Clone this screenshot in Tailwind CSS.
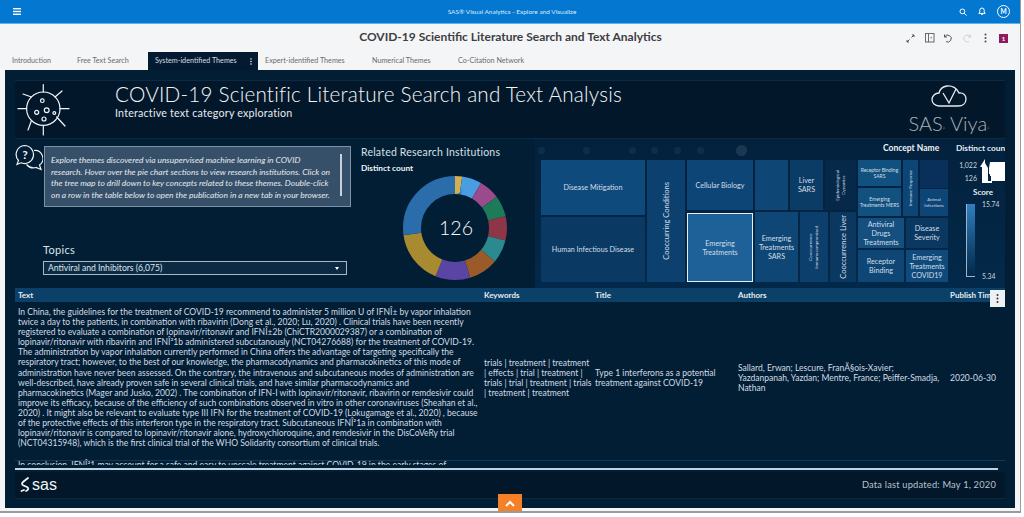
<!DOCTYPE html>
<html lang="en">
<head>
  <meta charset="UTF-8" />
  <title>COVID-19 Scientific Literature Search and Text Analytics</title>
  <script src="https://cdn.jsdelivr.net/npm/@tailwindcss/browser@4"></script>
</head>
<body class="bg-white h-[517px] w-[1024px] overflow-hidden font-['Lato',sans-serif]">
  <div class="relative h-[513px] w-[1021px] bg-[#f4f5f7] border-r border-b-2 border-[#9a9a9a] flex flex-col overflow-hidden">

    <!-- App bar -->
    <header class="h-[24px] shrink-0 bg-[#0478d0] border-b border-[#5fb0ea] flex items-center justify-between pl-[13px] pr-[10px] text-white">
      <svg width="8" height="7" viewBox="0 0 8 7" fill="white"><rect width="8" height="1.4"/><rect y="2.8" width="8" height="1.4"/><rect y="5.6" width="8" height="1.4"/></svg>
      <div class="absolute left-0 w-[1024px] text-center text-[6.500px] text-[#dcecf9]">SAS® Visual Analytics - Explore and Visualize</div>
      <div class="flex items-center gap-[11px]">
        <svg width="8" height="8" viewBox="0 0 8 8" fill="none" stroke="white" stroke-width="1"><circle cx="3.4" cy="3.4" r="2.4"/><path d="M5.2 5.2 7.6 7.6"/></svg>
        <svg width="8" height="9" viewBox="0 0 8 9" fill="none" stroke="white" stroke-width="1"><path d="M4 1a2.200 2.200 0 0 1 2.200 2.200V5L7.200 6.400H.8L1.800 5V3.200A2.200 2.200 0 0 1 4 1Z"/><path d="M3.200 7.500h1.600"/></svg>
        <div class="w-[13px] h-[13px] rounded-full border border-white flex items-center justify-center text-[6.500px] font-bold">M</div>
      </div>
    </header>

    <!-- Report title -->
    <div class="h-[28px] shrink-0 relative flex items-center justify-end pr-[12px]">
      <div class="absolute left-0 top-[4px] w-[1021px] text-center text-[12px] font-bold text-[#3d3d42]">COVID-19 Scientific Literature Search and Text Analytics</div>
      <div class="flex items-center text-[#5c5c60]">
        <svg class="mr-[10px]" width="9" height="9" viewBox="0 0 9 9" fill="none" stroke="#55555a" stroke-width="1"><path d="M5.500 3.500 8 1M8 1H6M8 1v2M3.500 5.500 1 8M1 8h2M1 8V6"/></svg>
        <svg class="mr-[8px]" width="10" height="10" viewBox="0 0 10 10" fill="none" stroke="#6a6a70" stroke-width="1"><rect x=".5" y=".5" width="8.500" height="8.500"/><path d="M3.500 .5v8.500M5.500 4.800h1.500"/></svg>
        <svg class="mr-[9px]" width="10" height="10" viewBox="0 0 10 10" fill="none" stroke="#55555a" stroke-width="1"><path d="M1.500 1.500v2.500H4M1.700 3.800A3.500 3.500 0 1 1 3 8.600"/></svg>
        <svg class="mr-[12px]" width="10" height="10" viewBox="0 0 10 10" fill="none" stroke="#d0d0d4" stroke-width="1"><path d="M8.500 1.500v2.500H6M8.300 3.800A3.500 3.500 0 1 0 7 8.600"/></svg>
        <svg class="mr-[12px]" width="3" height="10" viewBox="0 0 3 10" fill="#4a4a50"><circle cx="1.500" cy="1.500" r="1"/><circle cx="1.500" cy="5" r="1"/><circle cx="1.500" cy="8.500" r="1"/></svg>
        <div class="w-[9px] h-[9px] bg-[#8f1a5d] text-white text-[6px] font-bold flex items-center justify-center">1</div>
      </div>
    </div>

    <!-- Tabs -->
    <nav class="h-[18px] shrink-0 flex items-stretch text-[7.200px] text-[#6b6b70]">
      <div class="w-[148px] flex items-center pl-[12px] pt-[1px]"><span class="w-[65px]">Introduction</span><span>Free Text Search</span></div>
      <div class="w-[110px] bg-[#031a30] text-[#d5dee6] flex items-center justify-between pl-[7px] pr-[6px] pt-[1px]">
        <span>System-identified Themes</span>
        <svg width="2" height="7" viewBox="0 0 2 7" fill="#e6edf3"><circle cx="1" cy="1" r=".8"/><circle cx="1" cy="3.500" r=".8"/><circle cx="1" cy="6" r=".8"/></svg>
      </div>
      <div class="flex items-center pl-[7px] pt-[1px]"><span class="w-[107px]">Expert-identified Themes</span><span class="w-[86px]">Numerical Themes</span><span>Co-Citation Network</span></div>
    </nav>

    <!-- Dashboard -->
    <main class="h-[438px] w-[1010px] ml-[5px] shrink-0 bg-[#011e35] px-[10px] pt-[10px] flex flex-col text-white">

      <!-- Banner -->
      <section class="h-[59px] shrink-0 bg-[#03172a] border-y border-[#0a2a45] relative">
        <svg class="absolute left-[-5px] top-[-3px]" width="70" height="60" viewBox="0 0 70 60" fill="none" stroke="#f2f5f8" stroke-width="1.200" stroke-linecap="round">
          <circle cx="33.300" cy="30.700" r="16.700"/>
          <path d="M33.300 14V6.500M33.300 47.500V57M16.600 30.700H8M50 30.700H59M21.500 19 13 16M45 19 52 13M21.500 42.500 18 52M46.700 39 55 48"/>
          <circle cx="32.300" cy="22.700" r="1.800"/><circle cx="26.700" cy="34.300" r="2"/><circle cx="36.700" cy="32.300" r="2.400"/><circle cx="44.300" cy="35" r="1.400"/><circle cx="34" cy="41" r="2"/>
        </svg>
        <div class="pl-[100px]">
          <h1 class="text-[20.700px] font-light leading-[27px] text-[#f4f7fa] tracking-[0.2px]">COVID-19 Scientific Literature Search and Text Analysis</h1>
          <p class="-mt-[2px] text-[10.700px] leading-[14px] text-[#e6ebf0] tracking-[0.2px]">Interactive text category exploration</p>
        </div>
        <div class="absolute left-[896px] top-[4px] w-[76px] flex flex-col items-center">
          <svg width="36" height="22" viewBox="0 0 36 22" fill="none" stroke="#e6ebf0" stroke-width="1.300"><path d="M8 21H27C32 21 35 18 35 14C35 10 32 7.500 28 8C26 3 21 .5 16 1C12 1.500 9 4 8 8C4 8 1 11 1 14.500C1 18 4 21 8 21Z"/><path d="M12 8 18 18 25 4"/></svg>
          <div class="mt-[4px] text-[20px] font-light leading-[24px] text-[#a9b3bd] whitespace-nowrap">SAS<sup class="text-[3px]">®</sup> Viya<sup class="text-[3px]">®</sup></div>
        </div>
      </section>

      <!-- Intro, donut, treemap -->
      <section class="h-[149px] shrink-0 flex">
        <div class="w-[346px] shrink-0 relative">
          <svg class="absolute left-0 top-[5px]" width="28" height="28" viewBox="0 0 28 28" fill="none" stroke="#f2f5f8" stroke-width="1.200"><path d="M9.500 1.500A9 9 0 1 1 6 18.800L2 20.500 3.500 16.500A9 9 0 0 1 9.500 1.500Z"/><path d="M19 6.500A8 8 0 0 1 24.500 21L26 25.500 21 23.500A9 9 0 0 1 11.500 20.500"/><text x="10" y="14.500" text-anchor="middle" font-size="12" font-weight="700" font-family="Lato" fill="#f2f5f8" stroke="none">?</text></svg>
          <div class="absolute left-[29px] top-[7px] w-[307px] h-[61px] bg-[#37506a] border border-[#7d92a5] pl-[6px] pt-[8px] text-[8.450px] leading-[11.700px] italic text-[#e3e9ee] whitespace-nowrap">
            <p>Explore themes discovered via unsupervised machine learning in COVID</p>
            <p>research. Hover over the pie chart sections to view research institutions. Click on</p>
            <p>the tree map to drill down to key concepts related to these themes. Double-click</p>
            <p>on a row in the table below to open the publication in a new tab in your browser.</p>
            <div class="absolute left-[295px] top-[7px] w-[2px] h-[42px] bg-[#c7d2dc]"></div>
          </div>
          <div class="absolute left-[28px] top-[103px] text-[11px] text-[#dce3e9] tracking-[0.3px]">Topics</div>
          <div class="absolute left-[28px] top-[122px] w-[304px] h-[14px] bg-[#0d2a44] border border-[#a9b8c5] flex items-center justify-between pl-[4px] pr-[7px] text-[8.600px] text-[#dfe6ec]">
            <span>Antiviral and Inhibitors (6,075)</span>
            <span class="w-0 h-0 border-x-[2px] border-x-transparent border-t-[3px] border-t-white"></span>
          </div>
        </div>

        <div class="w-[174px] shrink-0 relative">
          <div class="pt-[6px] text-[10.500px] leading-[15px] text-[#d9e0e6] tracking-[0.2px] whitespace-nowrap">Related Research Institutions</div>
          <div class="pt-[2px] text-[8.300px] leading-[12px] font-bold text-[#f0f3f6]">Distinct count</div>
          <svg class="absolute left-[42px] top-[37px]" width="104" height="104" viewBox="0 0 104 104" fill="none" stroke-width="18">
            <g transform="rotate(-90 52 52)">
              <circle cx="52" cy="52" r="43" pathLength="360" stroke="#d3b04f" stroke-dasharray="8 352" stroke-dashoffset="0"/>
              <circle cx="52" cy="52" r="43" pathLength="360" stroke="#4a9de0" stroke-dasharray="22 338" stroke-dashoffset="-8"/>
              <circle cx="52" cy="52" r="43" pathLength="360" stroke="#9b4a8c" stroke-dasharray="23 337" stroke-dashoffset="-30"/>
              <circle cx="52" cy="52" r="43" pathLength="360" stroke="#1f7a5a" stroke-dasharray="24 336" stroke-dashoffset="-53"/>
              <circle cx="52" cy="52" r="43" pathLength="360" stroke="#8d3645" stroke-dasharray="27 333" stroke-dashoffset="-77"/>
              <circle cx="52" cy="52" r="43" pathLength="360" stroke="#2a8a90" stroke-dasharray="26 334" stroke-dashoffset="-104"/>
              <circle cx="52" cy="52" r="43" pathLength="360" stroke="#9a5a2a" stroke-dasharray="33 327" stroke-dashoffset="-130"/>
              <circle cx="52" cy="52" r="43" pathLength="360" stroke="#5a45a5" stroke-dasharray="39 321" stroke-dashoffset="-163"/>
              <circle cx="52" cy="52" r="43" pathLength="360" stroke="#a88a30" stroke-dasharray="60 300" stroke-dashoffset="-202"/>
              <circle cx="52" cy="52" r="43" pathLength="360" stroke="#2b6cab" stroke-dasharray="98 262" stroke-dashoffset="-262"/>
            </g>
          </svg>
          <div class="absolute left-[43px] top-[37px] w-[104px] h-[104px] flex items-center justify-center text-[19.500px] font-light text-white">126</div>
        </div>

        <div class="flex-1 bg-gradient-to-b from-[#03213d] to-[#03294a] relative flex overflow-hidden pl-[6px]">
          <!-- faint bubbles behind the concept name strip -->
          <div class="absolute left-[3px] top-[8px] w-[7px] h-[7px] rounded-full bg-white/5"></div>
          <div class="absolute left-[48px] top-[8px] w-[7px] h-[7px] rounded-full bg-white/5"></div>
          <div class="absolute left-[94px] top-[8px] w-[7px] h-[7px] rounded-full bg-white/5"></div>
          <div class="absolute left-[116px] top-[8px] w-[7px] h-[7px] rounded-full bg-white/5"></div>
          <div class="absolute left-[139px] top-[8px] w-[7px] h-[7px] rounded-full bg-white/5"></div>
          <div class="absolute left-[162px] top-[8px] w-[7px] h-[7px] rounded-full bg-white/5"></div>
          <div class="absolute left-[201px] top-[6px] w-[11px] h-[11px] rounded-full bg-white/10"></div>

          <div class="w-[416px] shrink-0 pt-[21px] pr-[3px]">
            <div class="h-[122px] flex gap-[2px] text-[7.200px] leading-[9px] text-[#d3dee7] text-center">
              <div class="w-[104px] flex flex-col gap-[2px]">
                <div class="h-[55px] bg-[#0f4a7c] flex items-center justify-center">Disease Mitigation</div>
                <div class="flex-1 bg-[#0a3a64] flex items-center justify-center">Human Infectious Disease</div>
              </div>
              <div class="w-[38px] bg-[#0c416f] flex items-center justify-center"><span class="[writing-mode:vertical-rl] rotate-180 text-[7.500px]">Cooccurring Conditions</span></div>
              <div class="w-[66px] flex flex-col gap-[3px]">
                <div class="h-[50px] bg-[#0d4676] flex items-center justify-center">Cellular Biology</div>
                <div class="flex-1 bg-[#1e6198] border-[1.500px] border-[#e8eef3] flex items-center justify-center">Emerging<br />Treatments</div>
              </div>
              <div class="w-[101px] flex flex-col gap-[2px]">
                <div class="h-[50px] flex gap-[2px]">
                  <div class="w-[33px] bg-[#0e4775]"></div>
                  <div class="w-[33px] bg-[#0b3c66] flex items-center justify-center">Liver<br />SARS</div>
                  <div class="flex-1 bg-[#06294a] flex items-center justify-center"><span class="[writing-mode:vertical-rl] rotate-180 text-[4.500px] leading-[6px]">Epidemiological<br />Dynamics</span></div>
                </div>
                <div class="flex-1 flex gap-[2px]">
                  <div class="w-[43px] bg-[#0e4775] flex items-center justify-center">Emerging<br />Treatments<br />SARS</div>
                  <div class="w-[28px] bg-[#0c3f6b] flex items-center justify-center"><span class="[writing-mode:vertical-rl] rotate-180 text-[4.500px] leading-[6px]">Cooccurrence<br />Immunocompromised</span></div>
                  <div class="flex-1 bg-[#0a3860] flex items-center justify-center"><span class="[writing-mode:vertical-rl] rotate-180 text-[7.500px]">Cooccurrence Liver</span></div>
                </div>
              </div>
              <div class="w-[90px] flex flex-col gap-[2px]">
                <div class="h-[56px] flex gap-[2px]">
                  <div class="w-[43px] flex flex-col gap-[2px] text-[5px] leading-[6px]">
                    <div class="h-[26px] bg-[#11517f] flex items-center justify-center">Receptor Binding<br />SARS</div>
                    <div class="flex-1 bg-[#11517f] flex items-center justify-center">Emerging<br />Treatments MERS</div>
                  </div>
                  <div class="w-[15px] bg-[#0d4676] flex items-center justify-center"><span class="[writing-mode:vertical-rl] rotate-180 text-[4.500px]">Immune Response</span></div>
                  <div class="flex-1 flex flex-col gap-[1px] text-[4.500px] leading-[6px]">
                    <div class="h-[28px] bg-[#08305a]"></div>
                    <div class="flex-1 bg-[#0d4676] flex items-center justify-center">Animal<br />Infections</div>
                  </div>
                </div>
                <div class="h-[30px] flex gap-[2px]">
                  <div class="w-[46px] bg-[#144f80] flex items-center justify-center">Antiviral<br />Drugs<br />Treatments</div>
                  <div class="flex-1 bg-[#0a3860] flex items-center justify-center">Disease<br />Severity</div>
                </div>
                <div class="flex-1 flex gap-[2px]">
                  <div class="w-[46px] bg-[#0e4775] flex items-center justify-center">Receptor<br />Binding</div>
                  <div class="flex-1 bg-[#0f4a7c] flex items-center justify-center">Emerging<br />Treatments<br />COVID19</div>
                </div>
              </div>
            </div>
          </div>
          <div class="absolute left-[348px] top-[3px] text-[8.500px] font-bold text-[#f0f3f6]">Concept Name</div>
          <div class="absolute left-[421px] top-[3px] text-[8.300px] font-bold text-[#e6ebf0] whitespace-nowrap">Distinct count</div>
          <div class="absolute left-[422px] top-[20px] w-[20px] text-[7px] leading-[13px] text-[#c8d2da] text-right">1,022<br />126</div>
          <svg class="absolute left-[442px] top-[20px]" width="28" height="24" viewBox="0 0 28 24" fill="#fff"><path d="M8 0 3 8h2v16h10v-7h-4V9L8 4Z"/><path d="M13 3h15v19H13V15h-1V9Z"/><rect x="11" y="17" width="3" height="5" fill="#03294a"/></svg>
          <div class="absolute left-[438px] top-[47px] w-[20px] text-center text-[8px] font-bold text-[#e6ebf0]">Score</div>
          <div class="absolute left-[431px] top-[65px] w-[9px] h-[73px] bg-gradient-to-b from-[#2f7fc2] to-[#03294a] border-b border-l border-[#9db4c8]"></div>
          <div class="absolute left-[447px] top-[60px] text-[6.800px] text-[#c8d2da]">15.74</div>
          <div class="absolute left-[447px] top-[132px] text-[6.800px] text-[#c8d2da]">5.34</div>
        </div>
      </section>

      <!-- Table -->
      <section class="h-[177px] shrink-0 relative overflow-hidden text-[8.550px] leading-[10.100px] text-[#d2dbe3]">
        <div class="h-[14px] bg-[#0b4068] flex items-center text-[8px] font-bold text-[#e6ebf0]">
          <div class="w-[467px] pl-[3px]">Text</div><div class="w-[113px] pl-[2px]">Keywords</div><div class="w-[143px]">Title</div><div class="w-[212px]">Authors</div><div>Publish Time</div>
        </div>
        <div class="flex h-[159px] border-b border-[#0d3a5c]">
          <div class="w-[467px] shrink-0 pl-[3px] pt-[5px] whitespace-nowrap">
            <p>In China, the guidelines for the treatment of COVID-19 recommend to administer 5 million U of IFNÎ± by vapor inhalation</p>
            <p>twice a day to the patients, in combination with ribavirin (Dong et al., 2020; Lu, 2020) . Clinical trials have been recently</p>
            <p>registered to evaluate a combination of lopinavir/ritonavir and IFNÎ±2b (ChiCTR2000029387) or a combination of</p>
            <p>lopinavir/ritonavir with ribavirin and IFNÎ²1b administered subcutanously (NCT04276688) for the treatment of COVID-19.</p>
            <p>The administration by vapor inhalation currently performed in China offers the advantage of targeting specifically the</p>
            <p>respiratory tract; however, to the best of our knowledge, the pharmacodynamics and pharmacokinetics of this mode of</p>
            <p>administration have never been assessed. On the contrary, the intravenous and subcutaneous modes of administration are</p>
            <p>well-described, have already proven safe in several clinical trials, and have similar pharmacodynamics and</p>
            <p>pharmacokinetics (Mager and Jusko, 2002) . The combination of IFN-I with lopinavir/ritonavir, ribavirin or remdesivir could</p>
            <p>improve its efficacy, because of the efficiency of such combinations observed in vitro in other coronaviruses (Sheahan et al.,</p>
            <p>2020) . It might also be relevant to evaluate type III IFN for the treatment of COVID-19 (Lokugamage et al., 2020) , because</p>
            <p>of the protective effects of this interferon type in the respiratory tract. Subcutaneous IFNÎ²1a in combination with</p>
            <p>lopinavir/ritonavir is compared to lopinavir/ritonavir alone, hydroxychloroquine, and remdesivir in the DisCoVeRy trial</p>
            <p>(NCT04315948), which is the first clinical trial of the WHO Solidarity consortium of clinical trials.</p>
            <p class="mt-[12px]">In conclusion, IFNÎ²1 may account for a safe and easy to upscale treatment against COVID-19 in the early stages of</p>
          </div>
          <div class="w-[113px] shrink-0 pl-[2px] pt-[56px] whitespace-nowrap">trials | treatment | treatment<br />| effects | trial | treatment |<br />trials | trial | treatment | trials<br />| treatment | treatment</div>
          <div class="w-[143px] shrink-0 pt-[66px] whitespace-nowrap">Type 1 interferons as a potential<br />treatment against COVID-19</div>
          <div class="w-[212px] shrink-0 pt-[61px] whitespace-nowrap">Sallard, Erwan; Lescure, FranÃ§ois-Xavier;<br />Yazdanpanah, Yazdan; Mentre, France; Peiffer-Smadja,<br />Nathan</div>
          <div class="pt-[71px]">2020-06-30</div>
        </div>
      </section>

      <div class="h-[1.500px] mt-[3px] w-[983px] bg-[#c4d2de] shrink-0"></div>

      <!-- Footer -->
      <footer class="h-[27px] mt-[2px] shrink-0 bg-[#03172a] flex items-center justify-between pl-[5px] pr-[9px] border-b border-[#0a2a45]">
        <div class="flex items-center gap-[1px]">
          <svg width="11" height="15" viewBox="0 0 11 15" fill="none" stroke="#f2f5f8" stroke-width="1.800" stroke-linecap="round"><path d="M8 1 3 5C1.500 6.500 2 8 3.500 8.500L7 10C9 11 8.500 13 6 14"/><path d="M4 13 1.500 14"/></svg>
          <span class="text-[16px] leading-[16px] text-[#f2f5f8] font-['Liberation_Sans',sans-serif]">sas</span>
        </div>
        <div class="text-[9.300px] text-[#b9c4ce] tracking-[0.2px]">Data last updated: May 1, 2020</div>
      </footer>
    </main>

    <!-- Overlays -->
    <div class="absolute left-[990px] top-[290px] w-[15px] h-[17px] bg-[#eef1f4] flex items-center justify-center">
      <svg width="3" height="9" viewBox="0 0 3 9" fill="#333"><circle cx="1.500" cy="1" r="1"/><circle cx="1.500" cy="4.500" r="1"/><circle cx="1.500" cy="8" r="1"/></svg>
    </div>
    <div class="absolute left-[498px] top-[494px] w-[24px] h-[19px] bg-[#f58025] flex items-center justify-center">
      <svg width="10" height="7" viewBox="0 0 10 7" fill="none" stroke="white" stroke-width="2"><path d="M1 6 5 2l4 4"/></svg>
    </div>
  </div>
</body>
</html>
